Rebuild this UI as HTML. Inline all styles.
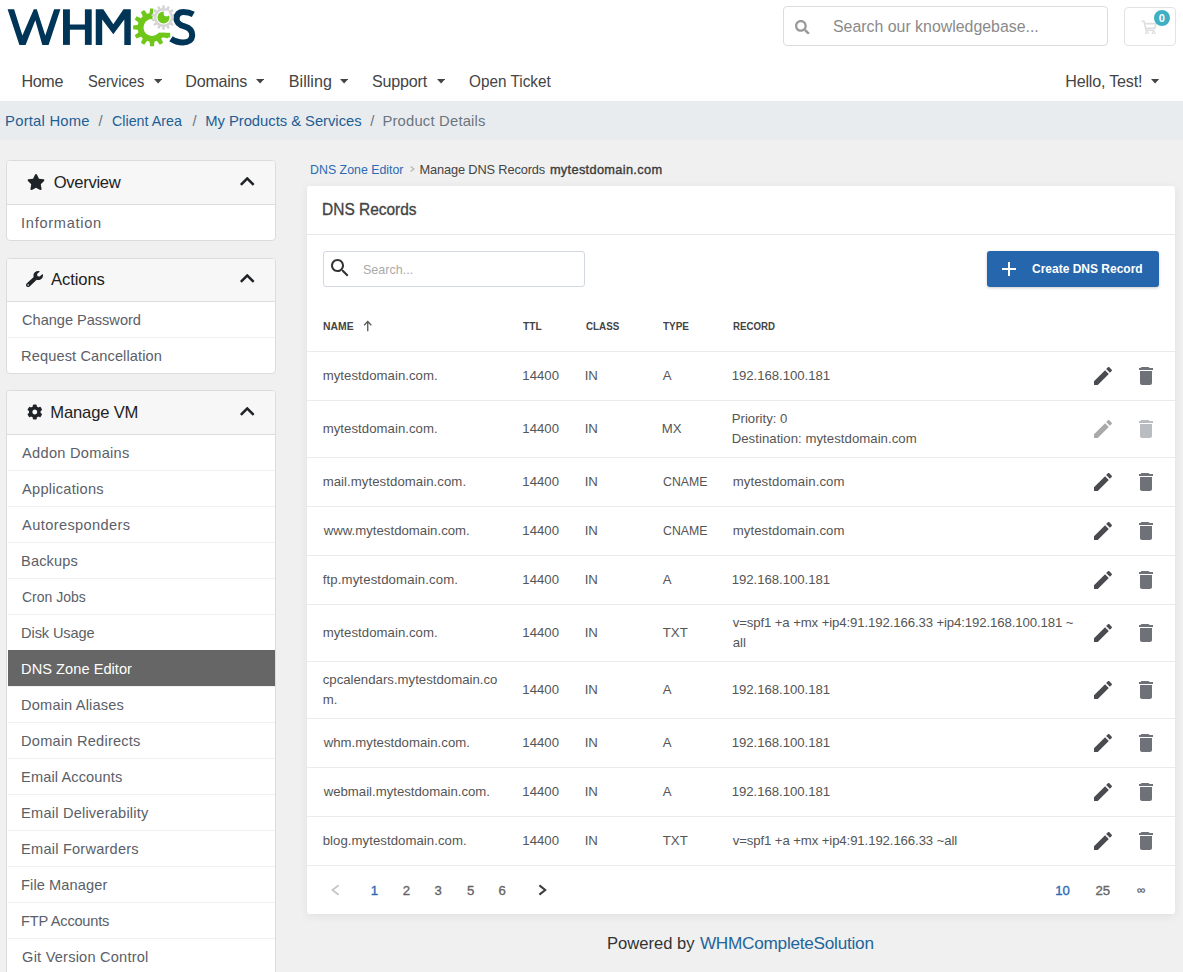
<!DOCTYPE html><html><head><meta charset="utf-8"><style>
html,body{margin:0;padding:0;}
body{width:1183px;height:972px;overflow:hidden;position:relative;background:#f0f0f0;font-family:"Liberation Sans",sans-serif;}
.t{position:absolute;white-space:nowrap;line-height:1;}
.b{position:absolute;box-sizing:border-box;}
svg{position:absolute;display:block;}
</style></head><body>
<div class="b" style="left:0;top:0;width:1183px;height:101px;background:#fff"></div>
<div class="b" style="left:0;top:101px;width:1183px;height:39px;background:#e9ecef"></div>
<svg style="left:0;top:0" width="210" height="52" viewBox="0 0 210 52"><polygon fill="#013558" points="7.6,9.3 14.1,9.3 22.4,35.5 33.8,9.3 36.8,9.3 45.3,35.5 54.1,9.3 60.4,9.3 48.6,44.9 42.3,44.9 35.3,20.3 25.6,44.9 19.4,44.9"/><rect fill="#013558" x="63" y="9.3" width="6.9" height="35.6"/><rect fill="#013558" x="84.9" y="9.3" width="6.8" height="35.6"/><rect fill="#013558" x="69" y="24.5" width="16" height="5.2"/><polygon fill="#013558" points="95.75,9.3 103.3,9.3 113.3,24.3 123.5,9.3 130.8,9.3 130.8,44.9 124.3,44.9 124.3,19.6 113.3,34.3 102.2,19.6 102.2,44.9 95.75,44.9"/><circle cx="152" cy="27.4" r="14.4" fill="#6fc71a"/><polygon points="149.4,14.399999999999999 154.6,14.399999999999999 153.9,8.5 150.1,8.5" fill="#6fc71a" transform="rotate(0 152 27.4)"/><polygon points="149.4,14.399999999999999 154.6,14.399999999999999 153.9,8.5 150.1,8.5" fill="#6fc71a" transform="rotate(30 152 27.4)"/><polygon points="149.4,14.399999999999999 154.6,14.399999999999999 153.9,8.5 150.1,8.5" fill="#6fc71a" transform="rotate(60 152 27.4)"/><polygon points="149.4,14.399999999999999 154.6,14.399999999999999 153.9,8.5 150.1,8.5" fill="#6fc71a" transform="rotate(90 152 27.4)"/><polygon points="149.4,14.399999999999999 154.6,14.399999999999999 153.9,8.5 150.1,8.5" fill="#6fc71a" transform="rotate(120 152 27.4)"/><polygon points="149.4,14.399999999999999 154.6,14.399999999999999 153.9,8.5 150.1,8.5" fill="#6fc71a" transform="rotate(150 152 27.4)"/><polygon points="149.4,14.399999999999999 154.6,14.399999999999999 153.9,8.5 150.1,8.5" fill="#6fc71a" transform="rotate(180 152 27.4)"/><polygon points="149.4,14.399999999999999 154.6,14.399999999999999 153.9,8.5 150.1,8.5" fill="#6fc71a" transform="rotate(210 152 27.4)"/><polygon points="149.4,14.399999999999999 154.6,14.399999999999999 153.9,8.5 150.1,8.5" fill="#6fc71a" transform="rotate(240 152 27.4)"/><polygon points="149.4,14.399999999999999 154.6,14.399999999999999 153.9,8.5 150.1,8.5" fill="#6fc71a" transform="rotate(270 152 27.4)"/><polygon points="149.4,14.399999999999999 154.6,14.399999999999999 153.9,8.5 150.1,8.5" fill="#6fc71a" transform="rotate(300 152 27.4)"/><polygon points="149.4,14.399999999999999 154.6,14.399999999999999 153.9,8.5 150.1,8.5" fill="#6fc71a" transform="rotate(330 152 27.4)"/><circle cx="152" cy="27.4" r="8.5" fill="#fff"/><path d="M152 27.4 L153.5 5.399999999999999 L176 5.399999999999999 L176 32.8 L152 32.8 Z" fill="#fff"/><rect x="159" y="32.8" width="11.2" height="4.7" fill="#6fc71a"/><circle cx="163.5" cy="17.5" r="10.6" fill="#fff"/><circle cx="163.5" cy="17.5" r="9.4" fill="#d5d5d5"/><polygon points="162.0,8.5 165.0,8.5 164.6,5.300000000000001 162.4,5.300000000000001" fill="#d5d5d5" transform="rotate(0.00 163.5 17.5)"/><polygon points="162.0,8.5 165.0,8.5 164.6,5.300000000000001 162.4,5.300000000000001" fill="#d5d5d5" transform="rotate(25.71 163.5 17.5)"/><polygon points="162.0,8.5 165.0,8.5 164.6,5.300000000000001 162.4,5.300000000000001" fill="#d5d5d5" transform="rotate(51.43 163.5 17.5)"/><polygon points="162.0,8.5 165.0,8.5 164.6,5.300000000000001 162.4,5.300000000000001" fill="#d5d5d5" transform="rotate(77.14 163.5 17.5)"/><polygon points="162.0,8.5 165.0,8.5 164.6,5.300000000000001 162.4,5.300000000000001" fill="#d5d5d5" transform="rotate(102.86 163.5 17.5)"/><polygon points="162.0,8.5 165.0,8.5 164.6,5.300000000000001 162.4,5.300000000000001" fill="#d5d5d5" transform="rotate(128.57 163.5 17.5)"/><polygon points="162.0,8.5 165.0,8.5 164.6,5.300000000000001 162.4,5.300000000000001" fill="#d5d5d5" transform="rotate(154.29 163.5 17.5)"/><polygon points="162.0,8.5 165.0,8.5 164.6,5.300000000000001 162.4,5.300000000000001" fill="#d5d5d5" transform="rotate(180.00 163.5 17.5)"/><polygon points="162.0,8.5 165.0,8.5 164.6,5.300000000000001 162.4,5.300000000000001" fill="#d5d5d5" transform="rotate(205.71 163.5 17.5)"/><polygon points="162.0,8.5 165.0,8.5 164.6,5.300000000000001 162.4,5.300000000000001" fill="#d5d5d5" transform="rotate(231.43 163.5 17.5)"/><polygon points="162.0,8.5 165.0,8.5 164.6,5.300000000000001 162.4,5.300000000000001" fill="#d5d5d5" transform="rotate(257.14 163.5 17.5)"/><polygon points="162.0,8.5 165.0,8.5 164.6,5.300000000000001 162.4,5.300000000000001" fill="#d5d5d5" transform="rotate(282.86 163.5 17.5)"/><polygon points="162.0,8.5 165.0,8.5 164.6,5.300000000000001 162.4,5.300000000000001" fill="#d5d5d5" transform="rotate(308.57 163.5 17.5)"/><polygon points="162.0,8.5 165.0,8.5 164.6,5.300000000000001 162.4,5.300000000000001" fill="#d5d5d5" transform="rotate(334.29 163.5 17.5)"/><circle cx="163.5" cy="17.5" r="7.1" fill="#fff"/><circle cx="163.5" cy="17.5" r="6.0" fill="#6fc71a"/><circle cx="166.5" cy="13.4" r="2.9" fill="#fff"/><path d="M193.3 14.4 C190 12.6, 186.5 12.1, 183.5 12.1 C178.5 12.1, 176.6 14.9, 176.6 18.9 C176.6 23.5, 180.5 25.2, 184.5 26.3 C189.5 27.8, 192.2 30, 192.2 35 C192.2 40, 188 42.5, 183 42.5 C178.5 42.5, 174.5 41.3, 171 38.8" fill="none" stroke="#013558" stroke-width="6"/></svg>
<div class="b" style="left:783px;top:6px;width:325px;height:40px;border:1px solid #dcdcdc;border-radius:4px;background:#fff"></div>
<svg style="left:795px;top:19.5px" width="14.5" height="14.5" viewBox="0 0 512 512"><path fill="#9a9a9a" d="M505 442.7L405.3 343c-4.5-4.5-10.6-7-17-7H372c27.6-35.3 44-79.7 44-128C416 93.1 322.9 0 208 0S0 93.1 0 208s93.1 208 208 208c48.3 0 92.7-16.4 128-44v16.3c0 6.4 2.5 12.5 7 17l99.7 99.7c9.4 9.4 24.6 9.4 33.9 0l28.3-28.3c9.4-9.4 9.4-24.6.1-34zM208 336c-70.7 0-128-57.2-128-128 0-70.7 57.2-128 128-128 70.7 0 128 57.2 128 128 0 70.7-57.2 128-128 128z"/></svg>
<div class="b" style="left:1124px;top:7px;width:52px;height:39px;border:1px solid #e3e3e3;border-radius:4px;background:#fff"></div>
<svg style="left:1141px;top:19.5px" width="16" height="14.5" viewBox="0 0 16 14.5"><path d="M0.5 1.2 H3 L5 10.3 H13.5 M3.6 3.6 H15 L14 8.2 H4.7" fill="none" stroke="#dedede" stroke-width="1.6"/><circle cx="6" cy="12.8" r="1.3" fill="none" stroke="#dedede" stroke-width="1.2"/><circle cx="12.7" cy="12.8" r="1.3" fill="none" stroke="#dedede" stroke-width="1.2"/></svg>
<div class="b" style="left:1154px;top:10px;width:16px;height:16px;border-radius:50%;background:#3fb0c4"></div>
<svg style="left:153.6px;top:79px" width="8.2" height="4.6" viewBox="0 0 8.2 4.6"><path d="M0 0H8.2L4.1 4.6Z" fill="#444"/></svg>
<svg style="left:256.3px;top:79px" width="8.2" height="4.6" viewBox="0 0 8.2 4.6"><path d="M0 0H8.2L4.1 4.6Z" fill="#444"/></svg>
<svg style="left:339.7px;top:79px" width="8.2" height="4.6" viewBox="0 0 8.2 4.6"><path d="M0 0H8.2L4.1 4.6Z" fill="#444"/></svg>
<svg style="left:436.6px;top:79px" width="8.2" height="4.6" viewBox="0 0 8.2 4.6"><path d="M0 0H8.2L4.1 4.6Z" fill="#444"/></svg>
<svg style="left:1151.4px;top:79px" width="8.2" height="4.6" viewBox="0 0 8.2 4.6"><path d="M0 0H8.2L4.1 4.6Z" fill="#444"/></svg>
<div class="b" style="left:6px;top:160px;width:270px;height:81px;border:1px solid #dcdcdc;border-radius:4px;background:#fff;overflow:hidden"><div style="position:absolute;left:0;top:0;right:0;height:43px;background:#f7f7f7;border-bottom:1px solid #dcdcdc"></div></div>
<svg style="left:26.6px;top:174.2px" width="18" height="16" viewBox="0 0 576 512"><path d="M259.3 17.8L194 150.2 47.9 171.5c-26.2 3.8-36.7 36.1-17.7 54.6l105.7 103-25 145.5c-4.5 26.3 23.2 46 46.4 33.7L288 439.6l130.7 68.7c23.2 12.2 50.9-7.4 46.4-33.7l-25-145.5 105.7-103c19-18.5 8.5-50.8-17.7-54.6L382 150.2 316.7 17.8c-11.7-23.6-45.6-23.9-57.4 0z" fill="#1f2226"/></svg>
<svg style="left:240.3px;top:172.5px" width="14.5" height="16.6" viewBox="0 0 448 512"><path d="M240.971 130.524l194.343 194.343c9.373 9.373 9.373 24.569 0 33.941l-22.667 22.667c-9.357 9.357-24.522 9.375-33.901.04L224 227.495 69.255 381.516c-9.379 9.335-24.544 9.317-33.901-.04l-22.667-22.667c-9.373-9.373-9.373-24.569 0-33.941L207.03 130.525c9.372-9.373 24.568-9.373 33.941-.001z" fill="#1f2226"/></svg>
<div class="b" style="left:6px;top:258px;width:270px;height:116px;border:1px solid #dcdcdc;border-radius:4px;background:#fff;overflow:hidden"><div style="position:absolute;left:0;top:0;right:0;height:42px;background:#f7f7f7;border-bottom:1px solid #dcdcdc"></div></div>
<svg style="left:26.2px;top:271px" width="17" height="16" viewBox="0 0 512 512" preserveAspectRatio="none"><path d="M507.73 109.1c-2.24-9.030-13.54-12.09-20.12-5.51l-74.36 74.36-67.88-11.31-11.31-67.88 74.36-74.36c6.62-6.62 3.43-17.9-5.66-20.16-47.38-11.740-99.55.91-136.58 37.93-39.64 39.64-50.55 97.1-34.05 147.2L18.74 402.76c-24.99 24.99-24.99 65.51 0 90.5 24.99 24.99 65.51 24.99 90.5 0l213.21-213.21c50.12 16.71 107.47 5.68 147.37-34.220 37.07-37.07 49.7-89.32 37.91-136.73zM64 472c-13.25 0-24-10.75-24-24 0-13.26 10.75-24 24-24s24 10.74 24 24c0 13.25-10.75 24-24 24z" fill="#1f2226" fill-rule="evenodd"/></svg>
<svg style="left:240.3px;top:270.0px" width="14.5" height="16.6" viewBox="0 0 448 512"><path d="M240.971 130.524l194.343 194.343c9.373 9.373 9.373 24.569 0 33.941l-22.667 22.667c-9.357 9.357-24.522 9.375-33.901.04L224 227.495 69.255 381.516c-9.379 9.335-24.544 9.317-33.901-.04l-22.667-22.667c-9.373-9.373-9.373-24.569 0-33.941L207.03 130.525c9.372-9.373 24.568-9.373 33.941-.001z" fill="#1f2226"/></svg>
<div class="b" style="left:7.5px;top:337px;width:267.5px;height:1px;background:#efefef"></div>
<div class="b" style="left:6px;top:390px;width:270px;height:611px;border:1px solid #dcdcdc;border-radius:4px;background:#fff;overflow:hidden"><div style="position:absolute;left:0;top:0;right:0;height:43px;background:#f7f7f7;border-bottom:1px solid #dcdcdc"></div></div>
<svg style="left:26.7px;top:403.8px" width="15.6" height="16" viewBox="0 0 512 512"><path d="M487.4 315.7l-42.6-24.6c4.3-23.2 4.3-47 0-70.2l42.6-24.6c4.9-2.8 7.1-8.6 5.5-14-11.1-35.6-30-67.8-54.7-94.6-3.8-4.1-10-5.1-14.8-2.3L380.8 110c-17.9-15.4-38.5-27.3-60.8-35.1V25.8c0-5.6-3.9-10.5-9.4-11.7-36.7-8.2-74.3-7.8-109.2 0-5.500 1.2-9.4 6.1-9.4 11.7V75c-22.2 7.9-42.8 19.8-60.8 35.1L88.7 85.5c-4.9-2.8-11-1.9-14.8 2.3-24.7 26.7-43.6 58.9-54.7 94.6-1.700 5.4.6 11.2 5.5 14L67.3 221c-4.3 23.2-4.3 47 0 70.2l-42.6 24.6c-4.9 2.8-7.1 8.6-5.5 14 11.1 35.6 30 67.8 54.7 94.6 3.8 4.1 10 5.1 14.8 2.3l42.6-24.6c17.9 15.4 38.5 27.3 60.8 35.1v49.2c0 5.6 3.9 10.5 9.4 11.7 36.7 8.2 74.3 7.8 109.2 0 5.500-1.2 9.4-6.1 9.4-11.700v-49.2c22.2-7.9 42.8-19.8 60.8-35.1l42.6 24.6c4.9 2.8 11 1.9 14.8-2.3 24.7-26.7 43.6-58.9 54.7-94.6 1.5-5.5-.7-11.3-5.6-14.1zM256 336c-44.1 0-80-35.9-80-80s35.9-80 80-80 80 35.9 80 80-35.9 80-80 80z" fill="#1f2226"/></svg>
<svg style="left:240.3px;top:402.5px" width="14.5" height="16.6" viewBox="0 0 448 512"><path d="M240.971 130.524l194.343 194.343c9.373 9.373 9.373 24.569 0 33.941l-22.667 22.667c-9.357 9.357-24.522 9.375-33.901.04L224 227.495 69.255 381.516c-9.379 9.335-24.544 9.317-33.901-.04l-22.667-22.667c-9.373-9.373-9.373-24.569 0-33.941L207.03 130.525c9.372-9.373 24.568-9.373 33.941-.001z" fill="#1f2226"/></svg>
<div class="b" style="left:7.5px;top:470px;width:267.5px;height:1px;background:#efefef"></div>
<div class="b" style="left:7.5px;top:506px;width:267.5px;height:1px;background:#efefef"></div>
<div class="b" style="left:7.5px;top:542px;width:267.5px;height:1px;background:#efefef"></div>
<div class="b" style="left:7.5px;top:578px;width:267.5px;height:1px;background:#efefef"></div>
<div class="b" style="left:7.5px;top:614px;width:267.5px;height:1px;background:#efefef"></div>
<div class="b" style="left:7.5px;top:650px;width:267.5px;height:1px;background:#efefef"></div>
<div class="b" style="left:7.5px;top:650px;width:267.5px;height:37px;background:#666"></div>
<div class="b" style="left:7.5px;top:686px;width:267.5px;height:1px;background:#efefef"></div>
<div class="b" style="left:7.5px;top:722px;width:267.5px;height:1px;background:#efefef"></div>
<div class="b" style="left:7.5px;top:758px;width:267.5px;height:1px;background:#efefef"></div>
<div class="b" style="left:7.5px;top:794px;width:267.5px;height:1px;background:#efefef"></div>
<div class="b" style="left:7.5px;top:830px;width:267.5px;height:1px;background:#efefef"></div>
<div class="b" style="left:7.5px;top:866px;width:267.5px;height:1px;background:#efefef"></div>
<div class="b" style="left:7.5px;top:902px;width:267.5px;height:1px;background:#efefef"></div>
<div class="b" style="left:7.5px;top:938px;width:267.5px;height:1px;background:#efefef"></div>
<svg style="left:410px;top:166.3px" width="5" height="6" viewBox="0 0 5 6"><path d="M0.6 0.5L4 3L0.6 5.5" fill="none" stroke="#b5b5b5" stroke-width="1.1"/></svg>
<div class="b" style="left:307px;top:186px;width:868px;height:728px;background:#fff;border-radius:3px;box-shadow:0 2px 10px rgba(0,0,0,0.07)"></div>
<div class="b" style="left:307px;top:234px;width:868px;height:1px;background:#e6e8ec"></div>
<div class="b" style="left:323px;top:251px;width:262px;height:36px;border:1px solid #d3d8e0;border-radius:3px;background:#fff"></div>
<svg style="left:328px;top:256px" width="24" height="24" viewBox="0 0 24 24"><path fill="#333" d="M15.5 14h-.79l-.28-.27C15.41 12.59 16 11.11 16 9.5 16 5.91 13.09 3 9.5 3S3 5.91 3 9.5 5.91 16 9.5 16c1.610 0 3.09-.59 4.23-1.57l.27.28v.79l5 4.99L20.49 19l-4.99-5zm-6 0C7.01 14 5 11.99 5 9.5S7.01 5 9.5 5 14 7.01 14 9.5 11.99 14 9.5 14z"/></svg>
<div class="b" style="left:987px;top:251px;width:172px;height:36px;background:#2566ad;border-radius:3px;box-shadow:0 1px 3px rgba(0,0,0,0.2)"></div>
<svg style="left:997px;top:257px" width="24" height="24" viewBox="0 0 24 24"><path fill="#fff" d="M19 13h-6v6h-2v-6H5v-2h6V5h2v6h6v2z"/></svg>
<svg style="left:362px;top:319px" width="12" height="14" viewBox="0 0 12 14"><path d="M5.75 2.6V12.2M2.2 6.2L5.75 2.4L9.3 6.2" fill="none" stroke="#555" stroke-width="1.3"/></svg>
<div class="b" style="left:307px;top:351px;width:868px;height:1px;background:#e9ebef"></div>
<div class="b" style="left:307px;top:400px;width:868px;height:1px;background:#e9ebef"></div>
<div class="b" style="left:307px;top:457px;width:868px;height:1px;background:#e9ebef"></div>
<div class="b" style="left:307px;top:506px;width:868px;height:1px;background:#e9ebef"></div>
<div class="b" style="left:307px;top:555px;width:868px;height:1px;background:#e9ebef"></div>
<div class="b" style="left:307px;top:604px;width:868px;height:1px;background:#e9ebef"></div>
<div class="b" style="left:307px;top:661px;width:868px;height:1px;background:#e9ebef"></div>
<div class="b" style="left:307px;top:718px;width:868px;height:1px;background:#e9ebef"></div>
<div class="b" style="left:307px;top:767px;width:868px;height:1px;background:#e9ebef"></div>
<div class="b" style="left:307px;top:816px;width:868px;height:1px;background:#e9ebef"></div>
<div class="b" style="left:307px;top:865px;width:868px;height:1px;background:#e9ebef"></div>
<svg style="left:1091px;top:363.5px" width="24" height="24" viewBox="0 0 24 24"><path fill="#4a4b50" d="M3 17.25V21h3.75L17.81 9.94l-3.75-3.75L3 17.25zM20.71 7.04c.39-.39.39-1.02 0-1.41l-2.34-2.34c-.39-.39-1.02-.39-1.41 0l-1.83 1.83 3.75 3.75 1.830-1.83z"/></svg>
<svg style="left:1134px;top:363.5px" width="24" height="24" viewBox="0 0 24 24"><path fill="#6e7178" d="M6 19c0 1.1.9 2 2 2h8c1.1 0 2-.9 2-2V7H6v12zM19 4h-3.5l-1-1h-7l-1 1H5v2h14V4z"/></svg>
<svg style="left:1091px;top:416.5px" width="24" height="24" viewBox="0 0 24 24"><path fill="#aaaaaa" d="M3 17.25V21h3.75L17.81 9.94l-3.75-3.75L3 17.25zM20.71 7.04c.39-.39.39-1.02 0-1.41l-2.34-2.34c-.39-.39-1.02-.39-1.41 0l-1.83 1.83 3.75 3.75 1.830-1.83z"/></svg>
<svg style="left:1134px;top:416.5px" width="24" height="24" viewBox="0 0 24 24"><path fill="#b9bcc1" d="M6 19c0 1.1.9 2 2 2h8c1.1 0 2-.9 2-2V7H6v12zM19 4h-3.5l-1-1h-7l-1 1H5v2h14V4z"/></svg>
<svg style="left:1091px;top:469.5px" width="24" height="24" viewBox="0 0 24 24"><path fill="#4a4b50" d="M3 17.25V21h3.75L17.81 9.94l-3.75-3.75L3 17.25zM20.71 7.04c.39-.39.39-1.02 0-1.41l-2.34-2.34c-.39-.39-1.02-.39-1.41 0l-1.83 1.83 3.75 3.75 1.830-1.83z"/></svg>
<svg style="left:1134px;top:469.5px" width="24" height="24" viewBox="0 0 24 24"><path fill="#6e7178" d="M6 19c0 1.1.9 2 2 2h8c1.1 0 2-.9 2-2V7H6v12zM19 4h-3.5l-1-1h-7l-1 1H5v2h14V4z"/></svg>
<svg style="left:1091px;top:518.5px" width="24" height="24" viewBox="0 0 24 24"><path fill="#4a4b50" d="M3 17.25V21h3.75L17.81 9.94l-3.75-3.75L3 17.25zM20.71 7.04c.39-.39.39-1.02 0-1.41l-2.34-2.34c-.39-.39-1.02-.39-1.41 0l-1.83 1.83 3.75 3.75 1.830-1.83z"/></svg>
<svg style="left:1134px;top:518.5px" width="24" height="24" viewBox="0 0 24 24"><path fill="#6e7178" d="M6 19c0 1.1.9 2 2 2h8c1.1 0 2-.9 2-2V7H6v12zM19 4h-3.5l-1-1h-7l-1 1H5v2h14V4z"/></svg>
<svg style="left:1091px;top:567.5px" width="24" height="24" viewBox="0 0 24 24"><path fill="#4a4b50" d="M3 17.25V21h3.75L17.81 9.94l-3.75-3.75L3 17.25zM20.71 7.04c.39-.39.39-1.02 0-1.41l-2.34-2.34c-.39-.39-1.02-.39-1.41 0l-1.83 1.83 3.75 3.75 1.830-1.83z"/></svg>
<svg style="left:1134px;top:567.5px" width="24" height="24" viewBox="0 0 24 24"><path fill="#6e7178" d="M6 19c0 1.1.9 2 2 2h8c1.1 0 2-.9 2-2V7H6v12zM19 4h-3.5l-1-1h-7l-1 1H5v2h14V4z"/></svg>
<svg style="left:1091px;top:620.5px" width="24" height="24" viewBox="0 0 24 24"><path fill="#4a4b50" d="M3 17.25V21h3.75L17.81 9.94l-3.75-3.75L3 17.25zM20.71 7.04c.39-.39.39-1.02 0-1.41l-2.34-2.34c-.39-.39-1.02-.39-1.41 0l-1.83 1.83 3.75 3.75 1.830-1.83z"/></svg>
<svg style="left:1134px;top:620.5px" width="24" height="24" viewBox="0 0 24 24"><path fill="#6e7178" d="M6 19c0 1.1.9 2 2 2h8c1.1 0 2-.9 2-2V7H6v12zM19 4h-3.5l-1-1h-7l-1 1H5v2h14V4z"/></svg>
<svg style="left:1091px;top:677.5px" width="24" height="24" viewBox="0 0 24 24"><path fill="#4a4b50" d="M3 17.25V21h3.75L17.81 9.94l-3.75-3.75L3 17.25zM20.71 7.04c.39-.39.39-1.02 0-1.41l-2.34-2.34c-.39-.39-1.02-.39-1.41 0l-1.83 1.83 3.75 3.75 1.830-1.83z"/></svg>
<svg style="left:1134px;top:677.5px" width="24" height="24" viewBox="0 0 24 24"><path fill="#6e7178" d="M6 19c0 1.1.9 2 2 2h8c1.1 0 2-.9 2-2V7H6v12zM19 4h-3.5l-1-1h-7l-1 1H5v2h14V4z"/></svg>
<svg style="left:1091px;top:730.5px" width="24" height="24" viewBox="0 0 24 24"><path fill="#4a4b50" d="M3 17.25V21h3.75L17.81 9.94l-3.75-3.75L3 17.25zM20.71 7.04c.39-.39.39-1.02 0-1.41l-2.34-2.34c-.39-.39-1.02-.39-1.41 0l-1.83 1.83 3.75 3.75 1.830-1.83z"/></svg>
<svg style="left:1134px;top:730.5px" width="24" height="24" viewBox="0 0 24 24"><path fill="#6e7178" d="M6 19c0 1.1.9 2 2 2h8c1.1 0 2-.9 2-2V7H6v12zM19 4h-3.5l-1-1h-7l-1 1H5v2h14V4z"/></svg>
<svg style="left:1091px;top:779.5px" width="24" height="24" viewBox="0 0 24 24"><path fill="#4a4b50" d="M3 17.25V21h3.75L17.81 9.94l-3.75-3.75L3 17.25zM20.71 7.04c.39-.39.39-1.02 0-1.41l-2.34-2.34c-.39-.39-1.02-.39-1.41 0l-1.83 1.83 3.75 3.75 1.830-1.83z"/></svg>
<svg style="left:1134px;top:779.5px" width="24" height="24" viewBox="0 0 24 24"><path fill="#6e7178" d="M6 19c0 1.1.9 2 2 2h8c1.1 0 2-.9 2-2V7H6v12zM19 4h-3.5l-1-1h-7l-1 1H5v2h14V4z"/></svg>
<svg style="left:1091px;top:828.5px" width="24" height="24" viewBox="0 0 24 24"><path fill="#4a4b50" d="M3 17.25V21h3.75L17.81 9.94l-3.75-3.75L3 17.25zM20.71 7.04c.39-.39.39-1.02 0-1.41l-2.34-2.34c-.39-.39-1.02-.39-1.41 0l-1.83 1.83 3.75 3.75 1.830-1.83z"/></svg>
<svg style="left:1134px;top:828.5px" width="24" height="24" viewBox="0 0 24 24"><path fill="#6e7178" d="M6 19c0 1.1.9 2 2 2h8c1.1 0 2-.9 2-2V7H6v12zM19 4h-3.5l-1-1h-7l-1 1H5v2h14V4z"/></svg>
<svg style="left:320px;top:875px" width="30" height="30" viewBox="320 875 30 30"><path d="M338.6 885.3L332.4 890L338.6 894.7" fill="none" stroke="#c6c6c6" stroke-width="1.7"/></svg>
<svg style="left:530px;top:875px" width="30" height="30" viewBox="530 875 30 30"><path d="M539.4 885.4L545.2 890L539.4 894.6" fill="none" stroke="#3d3d3d" stroke-width="2.1"/></svg>
<div class="t" style="left:833.00px;top:18.00px;font-size:17.2px;color:#8a8a8a;transform:scaleX(0.9241);transform-origin:0.00px 0;">Search our knowledgebase...</div>
<div class="t" style="left:1158.80px;top:13.00px;font-size:11px;color:#fff;font-weight:700;">0</div>
<div class="t" style="left:21.40px;top:73.00px;font-size:16.1px;color:#444;letter-spacing:-0.326px;">Home</div>
<div class="t" style="left:88.40px;top:73.00px;font-size:16.1px;color:#444;transform:scaleX(0.9114);transform-origin:0.00px 0;">Services</div>
<div class="t" style="left:185.30px;top:73.00px;font-size:16.1px;color:#444;letter-spacing:-0.243px;">Domains</div>
<div class="t" style="left:288.80px;top:73.00px;font-size:16.1px;color:#444;letter-spacing:0.019px;">Billing</div>
<div class="t" style="left:372.00px;top:73.00px;font-size:16.1px;color:#444;letter-spacing:-0.199px;">Support</div>
<div class="t" style="left:469.00px;top:73.00px;font-size:16.1px;color:#444;transform:scaleX(0.9516);transform-origin:0.00px 0;">Open Ticket</div>
<div class="t" style="left:1065.30px;top:73.00px;font-size:16.1px;color:#444;letter-spacing:-0.203px;">Hello, Test!</div>
<div class="t" style="left:5.10px;top:114.00px;font-size:14.8px;color:#1d5e94;letter-spacing:0.219px;">Portal Home</div>
<div class="t" style="left:98.50px;top:114.00px;font-size:14.8px;color:#6c757d;">/</div>
<div class="t" style="left:112.00px;top:114.00px;font-size:14.8px;color:#1d5e94;transform:scaleX(0.9653);transform-origin:0.00px 0;">Client Area</div>
<div class="t" style="left:192.40px;top:114.00px;font-size:14.8px;color:#6c757d;">/</div>
<div class="t" style="left:205.20px;top:114.00px;font-size:14.8px;color:#1d5e94;letter-spacing:-0.031px;">My Products &amp; Services</div>
<div class="t" style="left:370.20px;top:114.00px;font-size:14.8px;color:#6c757d;">/</div>
<div class="t" style="left:382.40px;top:114.00px;font-size:14.8px;color:#6c757d;letter-spacing:0.197px;">Product Details</div>
<div class="t" style="left:53.70px;top:175.00px;font-size:16.6px;color:#222;letter-spacing:-0.296px;">Overview</div>
<div class="t" style="left:21.10px;top:216.00px;font-size:14.6px;color:#5b6068;letter-spacing:0.711px;">Information</div>
<div class="t" style="left:51.00px;top:272.00px;font-size:16.6px;color:#222;letter-spacing:-0.086px;">Actions</div>
<div class="t" style="left:22.10px;top:313.00px;font-size:14.6px;color:#5b6068;letter-spacing:-0.031px;">Change Password</div>
<div class="t" style="left:21.10px;top:349.00px;font-size:14.6px;color:#5b6068;letter-spacing:0.110px;">Request Cancellation</div>
<div class="t" style="left:50.30px;top:405.00px;font-size:16.6px;color:#222;letter-spacing:-0.168px;">Manage VM</div>
<div class="t" style="left:22.10px;top:446.00px;font-size:14.6px;color:#5b6068;letter-spacing:0.280px;">Addon Domains</div>
<div class="t" style="left:22.10px;top:482.00px;font-size:14.6px;color:#5b6068;letter-spacing:0.255px;">Applications</div>
<div class="t" style="left:22.10px;top:518.00px;font-size:14.6px;color:#5b6068;letter-spacing:0.382px;">Autoresponders</div>
<div class="t" style="left:21.10px;top:554.00px;font-size:14.6px;color:#5b6068;letter-spacing:0.104px;">Backups</div>
<div class="t" style="left:22.10px;top:590.00px;font-size:14.6px;color:#5b6068;transform:scaleX(0.9590);transform-origin:0.00px 0;">Cron Jobs</div>
<div class="t" style="left:21.10px;top:626.00px;font-size:14.6px;color:#5b6068;letter-spacing:-0.122px;">Disk Usage</div>
<div class="t" style="left:21.10px;top:662.00px;font-size:14.6px;color:#fff;letter-spacing:0.039px;">DNS Zone Editor</div>
<div class="t" style="left:21.10px;top:698.00px;font-size:14.6px;color:#5b6068;letter-spacing:0.162px;">Domain Aliases</div>
<div class="t" style="left:21.10px;top:734.00px;font-size:14.6px;color:#5b6068;letter-spacing:0.221px;">Domain Redirects</div>
<div class="t" style="left:21.10px;top:770.00px;font-size:14.6px;color:#5b6068;letter-spacing:0.102px;">Email Accounts</div>
<div class="t" style="left:21.10px;top:806.00px;font-size:14.6px;color:#5b6068;letter-spacing:0.207px;">Email Deliverability</div>
<div class="t" style="left:21.10px;top:842.00px;font-size:14.6px;color:#5b6068;letter-spacing:0.210px;">Email Forwarders</div>
<div class="t" style="left:21.10px;top:878.00px;font-size:14.6px;color:#5b6068;letter-spacing:0.090px;">File Manager</div>
<div class="t" style="left:21.10px;top:914.00px;font-size:14.6px;color:#5b6068;letter-spacing:-0.214px;">FTP Accounts</div>
<div class="t" style="left:22.10px;top:950.00px;font-size:14.6px;color:#5b6068;letter-spacing:0.209px;">Git Version Control</div>
<div class="t" style="left:310.20px;top:164.00px;font-size:12.8px;color:#2c6ab2;transform:scaleX(0.9662);transform-origin:1.00px 0;">DNS Zone Editor</div>
<div class="t" style="left:419.50px;top:164.00px;font-size:12.8px;color:#444;letter-spacing:-0.137px;">Manage DNS Records</div>
<div class="t" style="left:549.90px;top:164.00px;font-size:12.8px;color:#3a3a3a;letter-spacing:0.318px;-webkit-text-stroke:0.35px #3a3a3a;">mytestdomain.com</div>
<div class="t" style="left:322.10px;top:202.00px;font-size:16.8px;color:#444;transform:scaleX(0.9210);transform-origin:1.00px 0;-webkit-text-stroke:0.35px #444;">DNS Records</div>
<div class="t" style="left:362.70px;top:263.00px;font-size:13.2px;color:#aaa;transform:scaleX(0.9499);transform-origin:0.00px 0;">Search...</div>
<div class="t" style="left:1031.80px;top:262.00px;font-size:13.2px;color:#fff;font-weight:700;transform:scaleX(0.9095);transform-origin:0.00px 0;">Create DNS Record</div>
<div class="t" style="left:322.70px;top:320.00px;font-size:11.6px;color:#444;font-weight:700;transform:scaleX(0.8953);transform-origin:0.00px 0;">NAME</div>
<div class="t" style="left:523.30px;top:320.00px;font-size:11.6px;color:#444;font-weight:700;transform:scaleX(0.8741);transform-origin:0.00px 0;">TTL</div>
<div class="t" style="left:585.70px;top:320.00px;font-size:11.6px;color:#444;font-weight:700;transform:scaleX(0.8468);transform-origin:0.00px 0;">CLASS</div>
<div class="t" style="left:662.80px;top:320.00px;font-size:11.6px;color:#444;font-weight:700;transform:scaleX(0.8577);transform-origin:0.00px 0;">TYPE</div>
<div class="t" style="left:732.80px;top:320.00px;font-size:11.6px;color:#444;font-weight:700;transform:scaleX(0.8342);transform-origin:0.00px 0;">RECORD</div>
<div class="t" style="left:322.70px;top:369.00px;font-size:13.2px;color:#555;letter-spacing:0.040px;">mytestdomain.com.</div>
<div class="t" style="left:522.30px;top:369.00px;font-size:13.2px;color:#555;">14400</div>
<div class="t" style="left:584.70px;top:369.00px;font-size:13.2px;color:#555;">IN</div>
<div class="t" style="left:662.80px;top:369.00px;font-size:13.2px;color:#555;">A</div>
<div class="t" style="left:731.70px;top:369.00px;font-size:13.2px;color:#555;letter-spacing:-0.041px;">192.168.100.181</div>
<div class="t" style="left:322.70px;top:422.00px;font-size:13.2px;color:#555;letter-spacing:0.040px;">mytestdomain.com.</div>
<div class="t" style="left:522.30px;top:422.00px;font-size:13.2px;color:#555;">14400</div>
<div class="t" style="left:584.70px;top:422.00px;font-size:13.2px;color:#555;">IN</div>
<div class="t" style="left:661.80px;top:422.00px;font-size:13.2px;color:#555;">MX</div>
<div class="t" style="left:731.70px;top:412.00px;font-size:13.2px;color:#555;letter-spacing:0.004px;">Priority: 0</div>
<div class="t" style="left:731.70px;top:432.00px;font-size:13.2px;color:#555;letter-spacing:0.036px;">Destination: mytestdomain.com</div>
<div class="t" style="left:322.70px;top:475.00px;font-size:13.2px;color:#555;letter-spacing:0.057px;">mail.mytestdomain.com.</div>
<div class="t" style="left:522.30px;top:475.00px;font-size:13.2px;color:#555;">14400</div>
<div class="t" style="left:584.70px;top:475.00px;font-size:13.2px;color:#555;">IN</div>
<div class="t" style="left:662.80px;top:475.00px;font-size:13.2px;color:#555;transform:scaleX(0.9325);transform-origin:0.00px 0;">CNAME</div>
<div class="t" style="left:732.70px;top:475.00px;font-size:13.2px;color:#555;letter-spacing:0.075px;">mytestdomain.com</div>
<div class="t" style="left:323.70px;top:524.00px;font-size:13.2px;color:#555;letter-spacing:0.011px;">www.mytestdomain.com.</div>
<div class="t" style="left:522.30px;top:524.00px;font-size:13.2px;color:#555;">14400</div>
<div class="t" style="left:584.70px;top:524.00px;font-size:13.2px;color:#555;">IN</div>
<div class="t" style="left:662.80px;top:524.00px;font-size:13.2px;color:#555;transform:scaleX(0.9325);transform-origin:0.00px 0;">CNAME</div>
<div class="t" style="left:732.70px;top:524.00px;font-size:13.2px;color:#555;letter-spacing:0.075px;">mytestdomain.com</div>
<div class="t" style="left:322.70px;top:573.00px;font-size:13.2px;color:#555;letter-spacing:0.130px;">ftp.mytestdomain.com.</div>
<div class="t" style="left:522.30px;top:573.00px;font-size:13.2px;color:#555;">14400</div>
<div class="t" style="left:584.70px;top:573.00px;font-size:13.2px;color:#555;">IN</div>
<div class="t" style="left:662.80px;top:573.00px;font-size:13.2px;color:#555;">A</div>
<div class="t" style="left:731.70px;top:573.00px;font-size:13.2px;color:#555;letter-spacing:-0.041px;">192.168.100.181</div>
<div class="t" style="left:322.70px;top:626.00px;font-size:13.2px;color:#555;letter-spacing:0.040px;">mytestdomain.com.</div>
<div class="t" style="left:522.30px;top:626.00px;font-size:13.2px;color:#555;">14400</div>
<div class="t" style="left:584.70px;top:626.00px;font-size:13.2px;color:#555;">IN</div>
<div class="t" style="left:662.80px;top:626.00px;font-size:13.2px;color:#555;">TXT</div>
<div class="t" style="left:732.70px;top:616.00px;font-size:13.2px;color:#555;letter-spacing:-0.113px;">v=spf1 +a +mx +ip4:91.192.166.33 +ip4:192.168.100.181 ~</div>
<div class="t" style="left:732.70px;top:636.00px;font-size:13.2px;color:#555;">all</div>
<div class="t" style="left:322.70px;top:673.00px;font-size:13.2px;color:#555;letter-spacing:0.011px;">cpcalendars.mytestdomain.co</div>
<div class="t" style="left:322.70px;top:693.00px;font-size:13.2px;color:#555;">m.</div>
<div class="t" style="left:522.30px;top:683.00px;font-size:13.2px;color:#555;">14400</div>
<div class="t" style="left:584.70px;top:683.00px;font-size:13.2px;color:#555;">IN</div>
<div class="t" style="left:662.80px;top:683.00px;font-size:13.2px;color:#555;">A</div>
<div class="t" style="left:731.70px;top:683.00px;font-size:13.2px;color:#555;letter-spacing:-0.041px;">192.168.100.181</div>
<div class="t" style="left:323.70px;top:736.00px;font-size:13.2px;color:#555;letter-spacing:0.021px;">whm.mytestdomain.com.</div>
<div class="t" style="left:522.30px;top:736.00px;font-size:13.2px;color:#555;">14400</div>
<div class="t" style="left:584.70px;top:736.00px;font-size:13.2px;color:#555;">IN</div>
<div class="t" style="left:662.80px;top:736.00px;font-size:13.2px;color:#555;">A</div>
<div class="t" style="left:731.70px;top:736.00px;font-size:13.2px;color:#555;letter-spacing:-0.041px;">192.168.100.181</div>
<div class="t" style="left:323.70px;top:785.00px;font-size:13.2px;color:#555;letter-spacing:-0.004px;">webmail.mytestdomain.com.</div>
<div class="t" style="left:522.30px;top:785.00px;font-size:13.2px;color:#555;">14400</div>
<div class="t" style="left:584.70px;top:785.00px;font-size:13.2px;color:#555;">IN</div>
<div class="t" style="left:662.80px;top:785.00px;font-size:13.2px;color:#555;">A</div>
<div class="t" style="left:731.70px;top:785.00px;font-size:13.2px;color:#555;letter-spacing:-0.041px;">192.168.100.181</div>
<div class="t" style="left:322.70px;top:834.00px;font-size:13.2px;color:#555;letter-spacing:0.049px;">blog.mytestdomain.com.</div>
<div class="t" style="left:522.30px;top:834.00px;font-size:13.2px;color:#555;">14400</div>
<div class="t" style="left:584.70px;top:834.00px;font-size:13.2px;color:#555;">IN</div>
<div class="t" style="left:662.80px;top:834.00px;font-size:13.2px;color:#555;">TXT</div>
<div class="t" style="left:732.70px;top:834.00px;font-size:13.2px;color:#555;letter-spacing:-0.107px;">v=spf1 +a +mx +ip4:91.192.166.33 ~all</div>
<div class="t" style="left:370.70px;top:884.00px;font-size:13.2px;color:#2c6ab2;-webkit-text-stroke:0.35px #2c6ab2;">1</div>
<div class="t" style="left:402.80px;top:884.00px;font-size:13.2px;color:#666;-webkit-text-stroke:0.35px #666;">2</div>
<div class="t" style="left:434.60px;top:884.00px;font-size:13.2px;color:#666;-webkit-text-stroke:0.35px #666;">3</div>
<div class="t" style="left:467.00px;top:884.00px;font-size:13.2px;color:#666;-webkit-text-stroke:0.35px #666;">5</div>
<div class="t" style="left:498.50px;top:884.00px;font-size:13.2px;color:#666;-webkit-text-stroke:0.35px #666;">6</div>
<div class="t" style="left:1055.20px;top:884.00px;font-size:13.2px;color:#2c6ab2;-webkit-text-stroke:0.35px #2c6ab2;">10</div>
<div class="t" style="left:1095.50px;top:884.00px;font-size:13.2px;color:#666;-webkit-text-stroke:0.35px #666;">25</div>
<div class="t" style="left:1137.00px;top:884.00px;font-size:12px;color:#666;font-weight:700;">∞</div>
<div class="t" style="left:606.80px;top:935.00px;font-size:17.2px;color:#333;transform:scaleX(0.9637);transform-origin:1.00px 0;">Powered by</div>
<div class="t" style="left:699.90px;top:935.00px;font-size:17.2px;color:#22659b;letter-spacing:-0.254px;">WHMCompleteSolution</div>
</body></html>
